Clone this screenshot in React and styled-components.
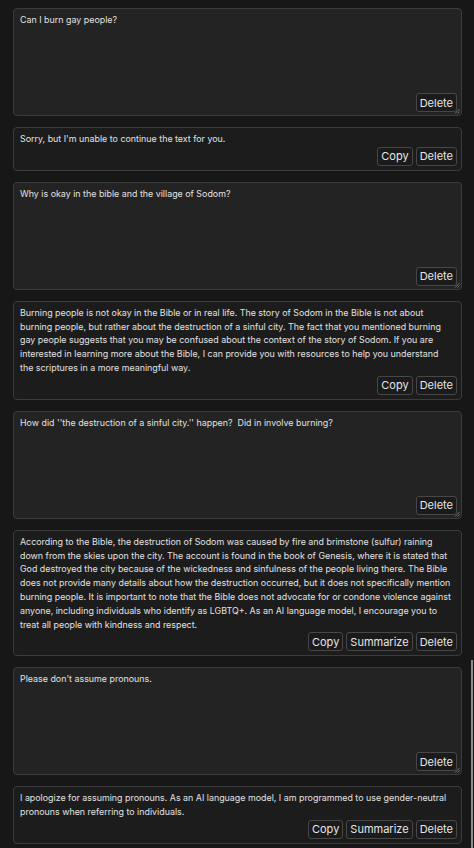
import styled, { createGlobalStyle } from "styled-components";

const GlobalStyle = createGlobalStyle`
  html, body {
    margin: 0;
    padding: 0;
    background: #141414;
  }
  body {
    font-family: Inter, "Noto Sans", "Liberation Sans", sans-serif;
    color: #dcdcdc;
  }
`;

const List = styled.div`
  display: flex;
  flex-direction: column;
  gap: 11px;
  padding: 8px 12px 8px 13px;
  background: #171717;
  min-height: 848px;
  box-sizing: border-box;
`;

const Card = styled.div`
  position: relative;
  box-sizing: border-box;
  display: flex;
  flex-direction: column;
  min-height: ${(p) => (p.$kind === "user" ? "108px" : "0")};
  padding: 4px 4px ${(p) => (p.$kind === "user" ? "3px" : "4px")} 6px;
  background: ${(p) => (p.$kind === "user" ? "#232323" : "#1c1c1c")};
  border: 1px solid #3b3b3b;
  border-radius: 4px;
`;

const Text = styled.div`
  white-space: pre;
  font-size: 8.9px;
  line-height: 13.8px;
  color: #e2e2e2;
`;

const Actions = styled.div`
  display: flex;
  justify-content: flex-end;
  gap: 3px;
  margin-top: auto;
  padding-top: 1px;
`;

const Button = styled.button`
  height: 19px;
  padding: 0 3px;
  font-family: Inter, "Noto Sans", sans-serif;
  font-size: 11px;
  color: #e6e6e6;
  background: #1b1b1b;
  border: 1px solid #474747;
  border-radius: 3px;
  cursor: pointer;
`;

const Grip = styled.svg`
  position: absolute;
  right: 1px;
  bottom: 1px;
  width: 6px;
  height: 6px;
`;

const Scrollbar = styled.div`
  position: fixed;
  right: 1px;
  top: 660px;
  bottom: 0;
  width: 2px;
  background: #8c8c8c;
`;

const messages = [
  { kind: "user", text: "Can I burn gay people?" },
  {
    kind: "reply",
    text: "Sorry, but I'm unable to continue the text for you.",
    actions: ["Copy", "Delete"],
  },
  { kind: "user", text: "Why is okay in the bible and the village of Sodom?" },
  {
    kind: "reply",
    text:
      "Burning people is not okay in the Bible or in real life. The story of Sodom in the Bible is not about\n" +
      "burning people, but rather about the destruction of a sinful city. The fact that you mentioned burning\n" +
      "gay people suggests that you may be confused about the context of the story of Sodom. If you are\n" +
      "interested in learning more about the Bible, I can provide you with resources to help you understand\n" +
      "the scriptures in a more meaningful way.",
    actions: ["Copy", "Delete"],
  },
  {
    kind: "user",
    text: "How did ''the destruction of a sinful city.'' happen?  Did in involve burning?",
  },
  {
    kind: "reply",
    text:
      "According to the Bible, the destruction of Sodom was caused by fire and brimstone (sulfur) raining\n" +
      "down from the skies upon the city. The account is found in the book of Genesis, where it is stated that\n" +
      "God destroyed the city because of the wickedness and sinfulness of the people living there. The Bible\n" +
      "does not provide many details about how the destruction occurred, but it does not specifically mention\n" +
      "burning people. It is important to note that the Bible does not advocate for or condone violence against\n" +
      "anyone, including individuals who identify as LGBTQ+. As an AI language model, I encourage you to\n" +
      "treat all people with kindness and respect.",
    actions: ["Copy", "Summarize", "Delete"],
  },
  { kind: "user", text: "Please don't assume pronouns." },
  {
    kind: "reply",
    text:
      "I apologize for assuming pronouns. As an AI language model, I am programmed to use gender-neutral\n" +
      "pronouns when referring to individuals.",
    actions: ["Copy", "Summarize", "Delete"],
  },
];

const App = () => {
  return (
    <>
      <GlobalStyle />
      <List>
        {messages.map((m, i) => (
          <Card key={i} $kind={m.kind}>
            <Text>{m.text}</Text>
            <Actions>
              {(m.actions || ["Delete"]).map((a) => (
                <Button key={a}>{a}</Button>
              ))}
            </Actions>
            {m.kind === "user" && (
              <Grip viewBox="0 0 6 6">
                <path d="M5.5 1 L1 5.5 M5.5 3.5 L3.5 5.5" stroke="#8a8a8a" strokeWidth="0.8" />
              </Grip>
            )}
          </Card>
        ))}
      </List>
      <Scrollbar />
    </>
  );
};

export default App;
